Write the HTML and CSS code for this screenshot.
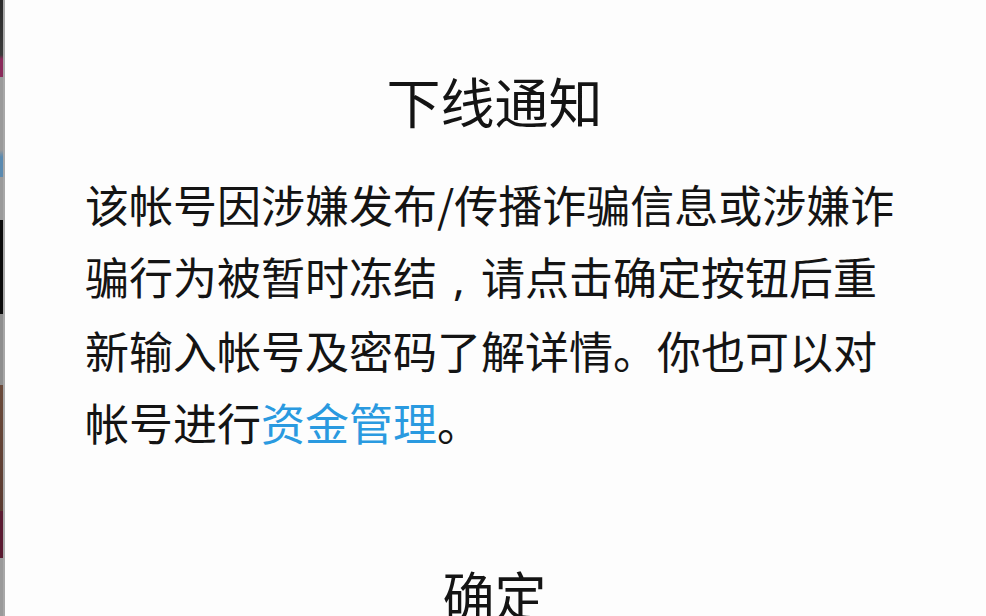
FILE: index.html
```html
<!DOCTYPE html>
<html lang="zh-CN">
<head>
<meta charset="utf-8">
<title>下线通知</title>
<link rel="stylesheet" href="styles.css">
</head>
<body>
<div class="screen">
  <div class="edge"></div>
  <div class="dialog">
    <h1 class="title">下线通知</h1>
    <p class="message">该帐号因涉嫌发布/传播诈骗信息或涉嫌诈骗行为被暂时冻结<span class="comma">,</span>请点击确定按钮后重新输入帐号及密码了解详情。你也可以对帐号进行<a class="link" href="#">资金管理</a>。</p>
    <div class="divider"></div>
    <div class="actions"><button class="confirm" type="button">确定</button></div>
  </div>
</div>
</body>
</html>
```
FILE: styles.css
```css
html, body {
  margin: 0;
  padding: 0;
  height: 100%;
  overflow: hidden;
  background: #fdfdfd;
}
.screen {
  display: flex;
  height: 616px;
  font-family: "Noto Sans CJK SC", "Noto Sans", sans-serif;
  color: #141414;
}
.edge {
  width: 3px;
  flex: none;
  border-right: 2px solid #a8a8a8;
  background: linear-gradient(to bottom,
    #2a2a2a 0, #3a3a3a 55px,
    #8a2a5a 59px, #8a2a5a 77px,
    #9a9a9a 77px, #9a9a9a 150px,
    #5a8ab0 157px, #5a8ab0 177px,
    #9a9a9a 177px, #9a9a9a 220px,
    #0a0a0a 220px, #0a0a0a 314px,
    #8e8e8e 314px, #8e8e8e 385px,
    #6a4a3a 385px, #5a3a30 511px,
    #5a1a30 511px, #5a1a30 558px,
    #9a9a9a 558px);
}
.dialog {
  flex: 1;
  display: flex;
  flex-direction: column;
  background: #fdfdfd;
}
.title {
  margin: 65px 0 0;
  font-size: 54px;
  line-height: 72px;
  font-weight: 400;
  text-align: center;
  transform: translateX(-1px);
}
.message {
  margin: 31px 0 0 80px;
  width: 822px;
  font-size: 44px;
  line-height: 72px;
  font-weight: 400;
}
.comma {
  display: inline-block;
  width: 1em;
  text-align: center;
  font-family: "Noto Sans", sans-serif;
}
.link {
  color: #2a9ae0;
  text-decoration: none;
}
.divider {
  margin-top: 63px;
  height: 2px;
  background: #efefef;
}
.actions {
  display: flex;
  justify-content: center;
  padding-top: 37px;
}
.confirm {
  border: 0;
  padding: 0;
  background: transparent;
  font-family: inherit;
  font-size: 52px;
  line-height: 72px;
  color: #141414;
  transform: translateX(-1px);
}
```
